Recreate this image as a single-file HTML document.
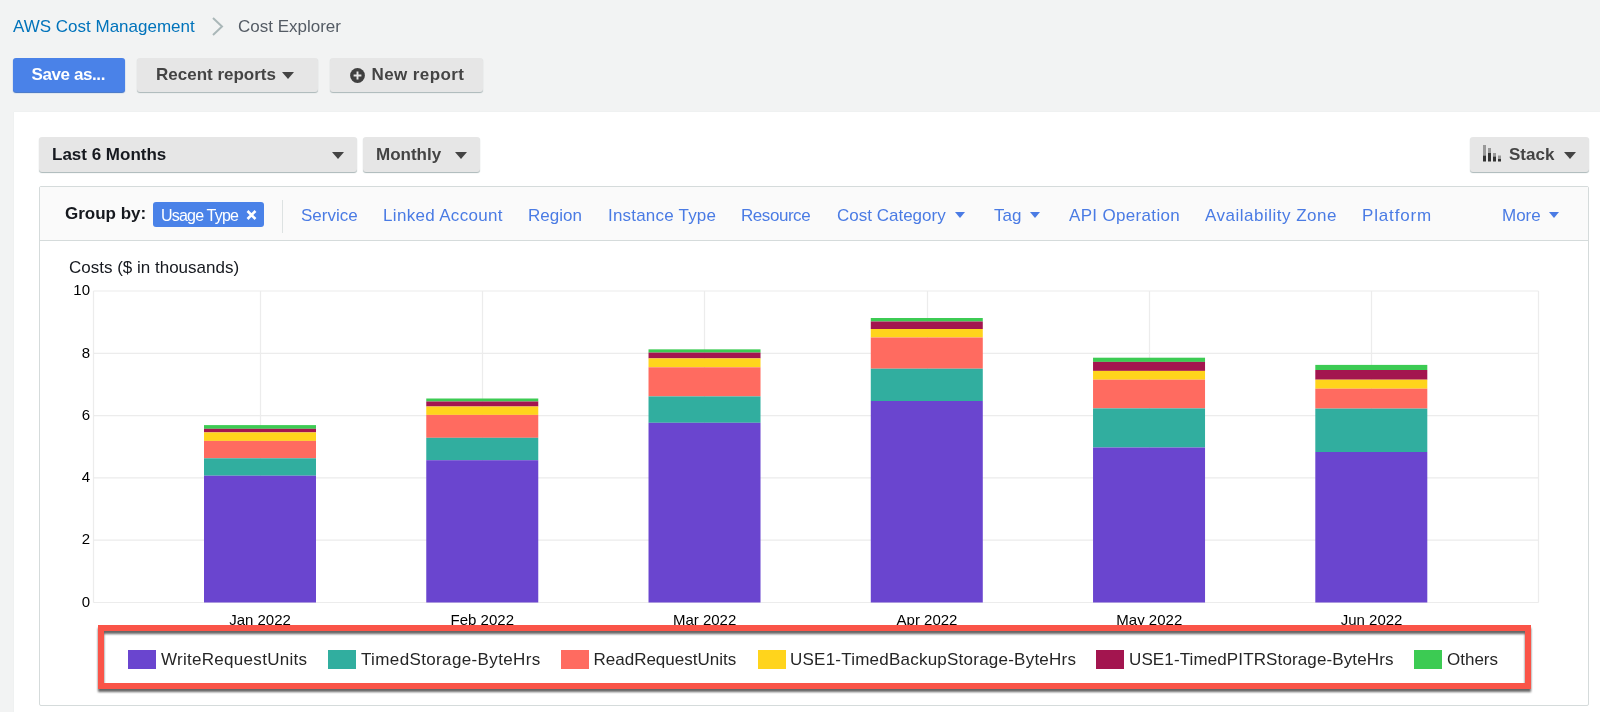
<!DOCTYPE html>
<html><head><meta charset="utf-8">
<style>
*{margin:0;padding:0;box-sizing:border-box}
html,body{width:1600px;height:712px;overflow:hidden;background:#f2f3f3;font-family:"Liberation Sans",sans-serif;position:relative;-webkit-font-smoothing:antialiased}
body{will-change:transform}
.a{position:absolute;white-space:nowrap;line-height:1}
.btn{position:absolute;background:#e6e6e6;border-radius:3px;box-shadow:0 1px 1px #aab7b8}
.b{font-weight:bold;color:#444;font-size:17px}
.caret{position:absolute;width:0;height:0;border-left:6px solid transparent;border-right:6px solid transparent;border-top:7px solid #444}
.nav{position:absolute;white-space:nowrap;line-height:1;font-size:17px;color:#4a7be4;top:206.6px}
.ncaret{position:absolute;width:0;height:0;border-left:5px solid transparent;border-right:5px solid transparent;border-top:6px solid #4a7be4;top:211.5px}
.yl{position:absolute;line-height:1;font-size:15px;color:#000;text-align:right;width:40px;left:50px}
.xl{position:absolute;line-height:1;font-size:15px;color:#000;text-align:center;width:120px;top:612px}
.lg{position:absolute;line-height:1;font-size:17px;color:#262626;top:650.6px;white-space:nowrap}
.sw{position:absolute;width:28px;height:18.5px;top:650px}
</style></head><body>
<!-- breadcrumb -->
<div class="a" style="left:13px;top:18px;font-size:17px;color:#0073bb">AWS Cost Management</div>
<svg style="position:absolute;left:210px;top:16px" width="16" height="22" viewBox="0 0 16 22"><path d="M3 2 L12 10.5 L3 19" fill="none" stroke="#aab7b8" stroke-width="2"/></svg>
<div class="a" style="left:238px;top:18px;font-size:17px;color:#545b64">Cost Explorer</div>

<!-- top buttons -->
<div class="btn" style="left:13px;top:58px;width:112px;height:34px;background:#4a82e8;box-shadow:0 1px 1px #3b6fc6"></div>
<div class="a b" style="left:31.5px;top:66px;color:#fff;letter-spacing:-0.4px">Save as...</div>
<div class="btn" style="left:137px;top:58px;width:181px;height:34px"></div>
<div class="a b" style="left:156px;top:66px">Recent reports</div>
<div class="caret" style="left:282px;top:72px"></div>
<div class="btn" style="left:330px;top:58px;width:153px;height:34px"></div>
<svg style="position:absolute;left:350px;top:68px" width="15" height="15" viewBox="0 0 15 15"><circle cx="7.5" cy="7.5" r="7.4" fill="#404040"/><path d="M7.5 3.6v7.8M3.6 7.5h7.8" stroke="#e6e6e6" stroke-width="1.9"/></svg>
<div class="a b" style="left:371.5px;top:66px;letter-spacing:0.4px">New report</div>

<!-- white card -->
<div style="position:absolute;left:14px;top:112px;width:1600px;height:700px;background:#fff;box-shadow:0 0 1px 0 #dfe3e3"></div>

<!-- dropdowns -->
<div class="btn" style="left:39px;top:137px;width:318px;height:35px"></div>
<div class="a b" style="left:52px;top:145.6px;color:#16191f">Last 6 Months</div>
<div class="caret" style="left:332px;top:152px"></div>
<div class="btn" style="left:363px;top:137px;width:117px;height:35px"></div>
<div class="a b" style="left:376px;top:145.6px">Monthly</div>
<div class="caret" style="left:455px;top:152px"></div>
<div class="btn" style="left:1470px;top:137px;width:119px;height:35px"></div>
<svg style="position:absolute;left:1482px;top:145px" width="20" height="17" viewBox="0 0 20 17">
<rect x="1" y="0" width="3" height="10.5" fill="#999"/><rect x="1" y="10.5" width="3" height="6" fill="#333"/>
<rect x="6" y="3" width="3" height="5" fill="#999"/><rect x="6" y="8" width="3" height="8.5" fill="#333"/>
<rect x="11" y="8" width="3" height="3.5" fill="#999"/><rect x="11" y="11.5" width="3" height="5" fill="#333"/>
<rect x="16" y="10.5" width="3" height="3.5" fill="#999"/><rect x="16" y="14" width="3" height="2.5" fill="#333"/>
</svg>
<div class="a b" style="left:1509px;top:145.6px">Stack</div>
<div class="caret" style="left:1564px;top:152px"></div>

<!-- panel -->
<div style="position:absolute;left:39px;top:186px;width:1550px;height:520px;border:1px solid #d5dbdb;border-radius:2px;background:#fff"></div>
<div style="position:absolute;left:40px;top:187px;width:1548px;height:54px;background:#fafafa;border-bottom:1px solid #d5dbdb"></div>
<div class="a b" style="left:65px;top:205.2px;color:#16191f">Group by:</div>
<div style="position:absolute;left:153px;top:202px;width:111px;height:25px;background:#4a82e8;border-radius:3px"></div>
<div class="a" style="left:161px;top:207.6px;font-size:16px;color:#fff;letter-spacing:-0.8px">Usage Type</div>
<svg style="position:absolute;left:245.5px;top:209px" width="11" height="12" viewBox="0 0 11 12"><path d="M1.5 2 L9.5 10 M9.5 2 L1.5 10" stroke="#fff" stroke-width="2.6"/></svg>
<div style="position:absolute;left:282px;top:200px;width:1px;height:33px;background:#dde2e2"></div>
<div class="nav" style="left:301px">Service</div>
<div class="nav" style="left:383px;letter-spacing:0.33px">Linked Account</div>
<div class="nav" style="left:528px">Region</div>
<div class="nav" style="left:608px;letter-spacing:0.2px">Instance Type</div>
<div class="nav" style="left:741px;letter-spacing:-0.45px">Resource</div>
<div class="nav" style="left:837px">Cost Category</div>
<div class="ncaret" style="left:955px"></div>
<div class="nav" style="left:994px">Tag</div>
<div class="ncaret" style="left:1030px"></div>
<div class="nav" style="left:1069px;letter-spacing:0.33px">API Operation</div>
<div class="nav" style="left:1205px;letter-spacing:0.5px">Availability Zone</div>
<div class="nav" style="left:1362px;letter-spacing:0.85px">Platform</div>
<div class="nav" style="left:1502px">More</div>
<div class="ncaret" style="left:1549px"></div>

<!-- chart -->
<div class="a" style="left:69px;top:258.7px;font-size:17px;color:#16191f">Costs ($ in thousands)</div>
<svg style="position:absolute;left:0;top:0" width="1600" height="712" viewBox="0 0 1600 712" id="chart">
<g stroke="#ececec" stroke-width="1.2" fill="none">
<path d="M93.5 291H1538.5M93.5 353.3H1538.5M93.5 415.6H1538.5M93.5 477.9H1538.5M93.5 540.2H1538.5M93.5 602.5H1538.5"/>
<path d="M93.5 291V602.5M1538.5 291V602.5M260.5 291V602.5M482.5 291V602.5M704.5 291V602.5M927.5 291V602.5M1149.5 291V602.5M1371.5 291V602.5"/>
</g>
<!-- bars -->
<rect x="204.00" y="425.10" width="112" height="3.70" fill="#3ccb53"/>
<rect x="204.00" y="428.80" width="112" height="3.60" fill="#a3154f"/>
<rect x="204.00" y="432.40" width="112" height="8.50" fill="#ffd41c"/>
<rect x="204.00" y="440.90" width="112" height="17.40" fill="#ff6b60"/>
<rect x="204.00" y="458.30" width="112" height="17.40" fill="#31ae9f"/>
<rect x="204.00" y="475.70" width="112" height="126.80" fill="#6a45cf"/>
<rect x="426.26" y="398.50" width="112" height="3.00" fill="#3ccb53"/>
<rect x="426.26" y="401.50" width="112" height="5.00" fill="#a3154f"/>
<rect x="426.26" y="406.50" width="112" height="8.40" fill="#ffd41c"/>
<rect x="426.26" y="414.90" width="112" height="22.90" fill="#ff6b60"/>
<rect x="426.26" y="437.80" width="112" height="22.40" fill="#31ae9f"/>
<rect x="426.26" y="460.20" width="112" height="142.30" fill="#6a45cf"/>
<rect x="648.52" y="349.35" width="112" height="3.25" fill="#3ccb53"/>
<rect x="648.52" y="352.60" width="112" height="5.80" fill="#a3154f"/>
<rect x="648.52" y="358.40" width="112" height="8.90" fill="#ffd41c"/>
<rect x="648.52" y="367.30" width="112" height="29.10" fill="#ff6b60"/>
<rect x="648.52" y="396.40" width="112" height="26.40" fill="#31ae9f"/>
<rect x="648.52" y="422.80" width="112" height="179.70" fill="#6a45cf"/>
<rect x="870.78" y="318.00" width="112" height="3.50" fill="#3ccb53"/>
<rect x="870.78" y="321.50" width="112" height="7.50" fill="#a3154f"/>
<rect x="870.78" y="329.00" width="112" height="8.50" fill="#ffd41c"/>
<rect x="870.78" y="337.50" width="112" height="31.20" fill="#ff6b60"/>
<rect x="870.78" y="368.70" width="112" height="32.30" fill="#31ae9f"/>
<rect x="870.78" y="401.00" width="112" height="201.50" fill="#6a45cf"/>
<rect x="1093.04" y="357.70" width="112" height="4.20" fill="#3ccb53"/>
<rect x="1093.04" y="361.90" width="112" height="9.00" fill="#a3154f"/>
<rect x="1093.04" y="370.90" width="112" height="8.80" fill="#ffd41c"/>
<rect x="1093.04" y="379.70" width="112" height="28.70" fill="#ff6b60"/>
<rect x="1093.04" y="408.40" width="112" height="39.10" fill="#31ae9f"/>
<rect x="1093.04" y="447.50" width="112" height="155.00" fill="#6a45cf"/>
<rect x="1315.30" y="364.90" width="112" height="5.10" fill="#3ccb53"/>
<rect x="1315.30" y="370.00" width="112" height="9.70" fill="#a3154f"/>
<rect x="1315.30" y="379.70" width="112" height="9.00" fill="#ffd41c"/>
<rect x="1315.30" y="388.70" width="112" height="19.90" fill="#ff6b60"/>
<rect x="1315.30" y="408.60" width="112" height="43.40" fill="#31ae9f"/>
<rect x="1315.30" y="452.00" width="112" height="150.50" fill="#6a45cf"/>
</svg>

<div class="yl" style="top:282.2px">10</div>
<div class="yl" style="top:344.5px">8</div>
<div class="yl" style="top:406.8px">6</div>
<div class="yl" style="top:469.1px">4</div>
<div class="yl" style="top:531.4px">2</div>
<div class="yl" style="top:593.7px">0</div>

<div class="xl" style="left:200px">Jan 2022</div>
<div class="xl" style="left:422.3px">Feb 2022</div>
<div class="xl" style="left:644.6px">Mar 2022</div>
<div class="xl" style="left:867px">Apr 2022</div>
<div class="xl" style="left:1089.3px">May 2022</div>
<div class="xl" style="left:1311.6px">Jun 2022</div>

<!-- legend -->
<div style="position:absolute;left:97.5px;top:625px;width:1433.5px;height:63.5px;border:6px solid #fa5448;filter:drop-shadow(0 3px 1px rgba(0,0,0,0.6))"></div>
<div class="sw" style="left:128px;background:#6a45cf"></div><div class="lg" style="left:161px;letter-spacing:0.29px">WriteRequestUnits</div>
<div class="sw" style="left:328px;background:#31ae9f"></div><div class="lg" style="left:361px;letter-spacing:0.37px">TimedStorage-ByteHrs</div>
<div class="sw" style="left:561px;background:#ff6b60"></div><div class="lg" style="left:593.5px">ReadRequestUnits</div>
<div class="sw" style="left:758px;background:#ffd41c"></div><div class="lg" style="left:790px;letter-spacing:0.23px">USE1-TimedBackupStorage-ByteHrs</div>
<div class="sw" style="left:1096px;background:#a3154f"></div><div class="lg" style="left:1129px;letter-spacing:0.12px">USE1-TimedPITRStorage-ByteHrs</div>
<div class="sw" style="left:1413.5px;background:#3ccb53"></div><div class="lg" style="left:1447px">Others</div>
</body></html>
